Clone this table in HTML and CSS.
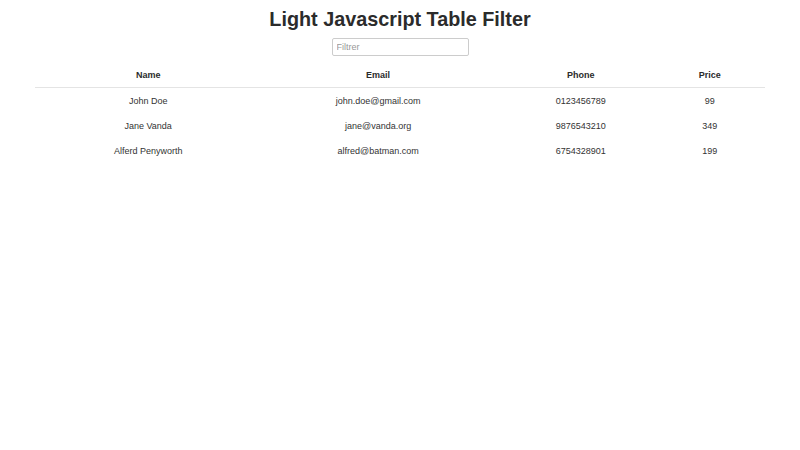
FILE: index.html
```html
<!DOCTYPE html>
<html>
<head>
<meta charset="utf-8">
<link rel="stylesheet" href="styles.css">
</head>
<body>
<h1 class="title">Light Javascript Table Filter</h1>
<div class="filter-wrap"><input class="filter" type="text" placeholder="Filtrer"></div>
<table class="data">
<colgroup><col class="c-name"><col class="c-email"><col class="c-phone"><col class="c-price"></colgroup>
<thead><tr><th>Name</th><th>Email</th><th>Phone</th><th class="price">Price</th></tr></thead>
<tbody>
<tr><td>John Doe</td><td>john.doe@gmail.com</td><td>0123456789</td><td class="price">99</td></tr>
<tr><td>Jane Vanda</td><td>jane@vanda.org</td><td>9876543210</td><td class="price">349</td></tr>
<tr><td>Alferd Penyworth</td><td>alfred@batman.com</td><td>6754328901</td><td class="price">199</td></tr>
</tbody>
</table>
</body>
</html>
```
FILE: styles.css
```css
body {
  margin: 0;
  padding: 0 35px;
  font-family: "Liberation Sans", Arial, sans-serif;
  color: #333;
  background: #fff;
}
.title {
  margin: 5px 0 0;
  font-size: 19.8px;
  line-height: 28px;
  text-align: center;
  font-weight: bold;
  color: #2b2b2b;
}
.filter-wrap {
  display: flex;
  justify-content: center;
  padding-top: 5px;
}
.filter {
  width: 137px;
  height: 18px;
  box-sizing: border-box;
  border: 1px solid #ccc;
  border-radius: 2px;
  padding: 0 4px;
  font-family: "Liberation Sans", Arial, sans-serif;
  font-size: 9px;
  color: #333;
}
.filter::placeholder { color: #999; }
.data {
  width: 100%;
  table-layout: fixed;
  border-collapse: collapse;
  margin-top: 7px;
  font-size: 9px;
}
.c-name { width: 31%; }
.c-email { width: 32%; }
.c-phone { width: 23.5%; }
.c-price { width: 13.5%; }
.data th {
  font-weight: bold;
  height: 24px;
  padding: 0;
  text-align: center;
  border-bottom: 1px solid #e4e4e4;
  color: #2b2b2b;
}
.data td {
  height: 25px;
  padding: 0;
  text-align: center;
}
.data .price { padding-right: 12px; }
```
